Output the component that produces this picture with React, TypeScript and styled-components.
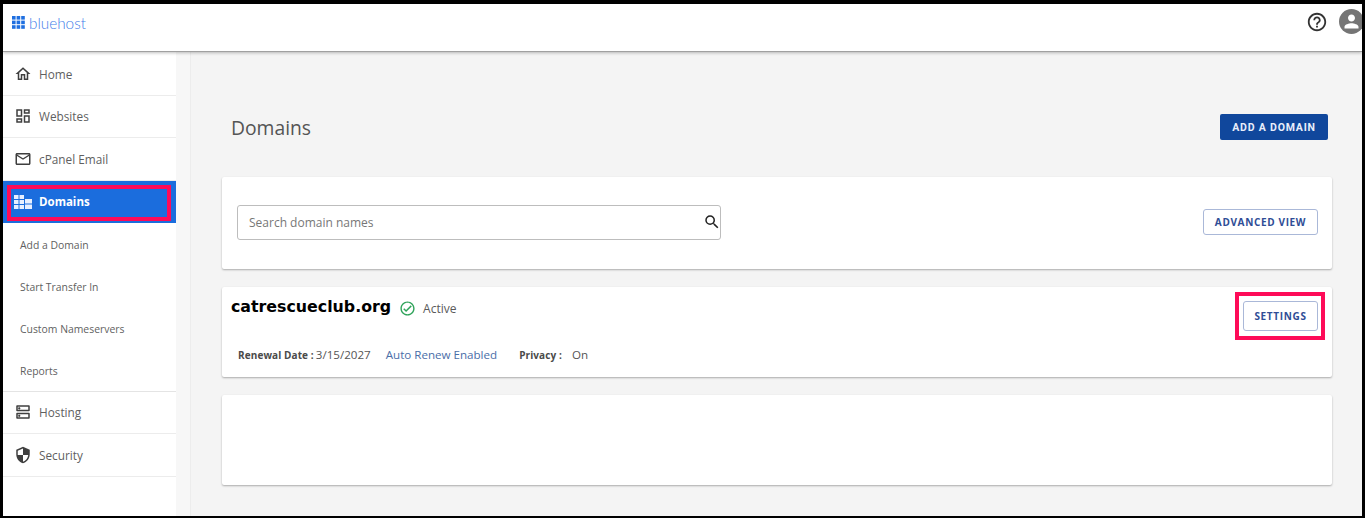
import React from "react";
import styled, { createGlobalStyle } from "styled-components";
import {
  MdOutlineHome,
  MdOutlineDashboard,
  MdOutlineEmail,
  MdOutlineDns,
  MdSecurity,
  MdHelpOutline,
  MdPerson,
  MdSearch,
  MdOutlineCheckCircle,
} from "react-icons/md";

const Global = createGlobalStyle`
  html, body { margin: 0; padding: 0; background: #000; }
  * { box-sizing: border-box; }
  body { font-family: "Open Sans", "Liberation Sans", sans-serif; }
`;

const Frame = styled.div`
  width: 1365px;
  height: 518px;
  border: solid #000;
  border-width: 4px 3px 2px 3px;
  background: #f4f4f4;
  display: flex;
  flex-direction: column;
  overflow: hidden;
`;

const Header = styled.header`
  height: 48px;
  flex: none;
  background: #fff;
  display: flex;
  align-items: center;
  justify-content: space-between;
  padding-left: 9px;
  border-bottom: 1px solid #a0a0a0;
  box-shadow: 0 1px 3px rgba(0, 0, 0, 0.25);
  position: relative;
  z-index: 2;
`;

const Logo = styled.div`
  display: flex;
  align-items: center;
  gap: 4px;
  margin-top: -10px;
  font-family: "Lato", sans-serif;
  font-size: 15.3px;
  font-weight: 300;
  color: #3f80ea;
`;

const HeaderIcons = styled.div`
  display: flex;
  align-items: center;
  gap: 11px;
  margin-top: -12px;
  margin-right: -2px;
`;

const Avatar = styled.div`
  width: 25px;
  height: 25px;
  border-radius: 50%;
  background: #757575;
  color: #fff;
  display: flex;
  align-items: center;
  justify-content: center;
`;

const Body = styled.div`
  flex: 1;
  display: flex;
  min-height: 0;
`;

const Sidebar = styled.nav`
  width: 173px;
  flex: none;
  background: #fff;
  display: flex;
  flex-direction: column;
  padding-top: 1px;
`;

const Gutter = styled.div`
  width: 15px;
  flex: none;
  background: #f7f7f7;
  border-right: 1px solid #ececec;
`;

const NavItem = styled.div<{ $active?: boolean }>`
  height: ${(p) => (p.$active ? "42px" : "42.5px")};
  flex: none;
  display: flex;
  align-items: center;
  gap: 7px;
  padding-left: 11px;
  position: relative;
  font-size: ${(p) => (p.$active ? "11.5px" : "11.8px")};
  font-weight: ${(p) => (p.$active ? 700 : 400)};
  color: ${(p) => (p.$active ? "#fff" : "#5f5f5f")};
  background: ${(p) => (p.$active ? "#1b6ddd" : "#fff")};
  border-bottom: ${(p) => (p.$active ? "none" : "1px solid #ececec")};
  svg { color: ${(p) => (p.$active ? "#e6efff" : "#3f3f3f")}; flex: none; }
`;

const SubGroup = styled.div`
  border-bottom: 1px solid #e4e4e4;
  height: 169px;
  padding-top: 1px;
  flex: none;
  display: flex;
  flex-direction: column;
`;

const SubItem = styled.div`
  height: 42px;
  flex: none;
  display: flex;
  align-items: center;
  padding-left: 17px;
  font-size: 10.4px;
  color: #5f5f5f;
`;

const ActiveMark = styled.div`
  position: absolute;
  left: 4px;
  top: 4px;
  width: 164px;
  height: 36px;
  border: 4px solid #fe0b58;
  pointer-events: none;
`;

const Main = styled.main`
  flex: 1;
  min-width: 0;
  padding: 62px 30px 0 31px;
  display: flex;
  flex-direction: column;
`;

const TitleRow = styled.div`
  display: flex;
  align-items: center;
  justify-content: space-between;
  height: 26px;
  margin-bottom: 37px;
  padding: 0 4px 0 9px;
`;

const Title = styled.h1`
  margin: 0;
  font-size: 19.3px;
  font-weight: 400;
  color: #555;
`;

const PrimaryButton = styled.button`
  width: 108px;
  height: 26px;
  padding: 0;
  border: none;
  border-radius: 2px;
  background: #10479c;
  color: #e9eefa;
  font-family: "Roboto", sans-serif;
  font-size: 10.5px;
  font-weight: 700;
  letter-spacing: 0.8px;
`;

const Card = styled.section<{ $h: number }>`
  height: ${(p) => p.$h}px;
  flex: none;
  background: #fff;
  border-radius: 2px;
  box-shadow: 0 1px 2px rgba(0, 0, 0, 0.3);
  margin-bottom: 18px;
`;

const SearchCard = styled(Card)`
  display: flex;
  align-items: center;
  justify-content: space-between;
  padding: 0 14px 2px 15px;
`;

const SearchField = styled.div`
  width: 484px;
  height: 35px;
  border: 1px solid #bdbdbd;
  border-radius: 3px;
  display: flex;
  align-items: center;
  justify-content: space-between;
  padding: 1px 0 0 11px;
  font-size: 12px;
  color: #777;
  svg { color: #222; margin-right: -1px; margin-top: -1px; }
`;

const OutlineButton = styled.button<{ $w: number; $h: number }>`
  width: ${(p) => p.$w}px;
  height: ${(p) => p.$h}px;
  padding: 0;
  background: #fff;
  border: 1px solid #aab8d8;
  border-radius: 3px;
  color: #2f4d96;
  font-family: "Open Sans", sans-serif;
  font-size: 10px;
  font-weight: 700;
  letter-spacing: 0.65px;
`;

const DomainCard = styled(Card)`
  display: flex;
  justify-content: space-between;
  padding: 5px 7px 0 9px;
`;

const DomainInfo = styled.div`
  display: flex;
  flex-direction: column;
`;

const NameRow = styled.div`
  display: flex;
  align-items: center;
  height: 30px;
`;

const DomainName = styled.span`
  font-family: "DejaVu Sans", sans-serif;
  font-size: 15.8px;
  font-weight: 700;
  color: #000;
  margin-right: 8px;
  margin-top: -2px;
`;

const Status = styled.span`
  display: flex;
  align-items: center;
  gap: 7px;
  font-size: 12px;
  color: #5a5a5a;
  margin-top: 2px;
  svg { color: #2fa35a; margin-top: 1px; }
`;

const MetaRow = styled.div`
  display: flex;
  align-items: baseline;
  margin-top: 25px;
  padding-left: 7px;
  font-size: 11.6px;
  color: #555;
`;

const MetaLabel = styled.span`
  font-size: 10px;
  font-weight: 700;
  color: #4a4a4a;
  letter-spacing: 0.1px;
  margin-right: 2px;
`;

const MetaLink = styled.span`
  color: #4a6ea8;
  margin: 0 22px 0 15px;
`;

const MetaGap = styled.span`
  margin-left: 8px;
`;

const SettingsMark = styled.div`
  width: 90px;
  height: 48px;
  border: 4px solid #fe0b58;
  display: flex;
  align-items: center;
  justify-content: flex-end;
  padding-right: 3px;
`;

const DomainsIcon = () => (
  <svg width="18" height="14" viewBox="0 0 18 14" fill="currentColor" aria-hidden="true">
    <path d="M0 0h10v14H0zM11 4h7v10h-7z" />
    <path
      d="M5 0v14M0 4.5h10M0 9.5h10M11 9h7"
      stroke="#1b6ddd"
      strokeWidth="1"
      fill="none"
    />
  </svg>
);

const LogoGrid = () => (
  <svg width="13" height="13" viewBox="0 0 13 13" fill="#1f6fe0" aria-hidden="true">
    {[0, 4.6, 9.2].flatMap((y) =>
      [0, 4.6, 9.2].map((x) => <rect key={`${x}-${y}`} x={x} y={y} width="3.6" height="3.6" />)
    )}
  </svg>
);

export default function App() {
  return (
    <Frame>
      <Global />
      <Header>
        <Logo>
          <LogoGrid />
          bluehost
        </Logo>
        <HeaderIcons>
          <MdHelpOutline size={22} color="#333" />
          <Avatar>
            <MdPerson size={21} />
          </Avatar>
        </HeaderIcons>
      </Header>
      <Body>
        <Sidebar>
          <NavItem><MdOutlineHome size={18} />Home</NavItem>
          <NavItem><MdOutlineDashboard size={18} />Websites</NavItem>
          <NavItem><MdOutlineEmail size={18} />cPanel Email</NavItem>
          <NavItem $active>
            <DomainsIcon />
            Domains
            <ActiveMark />
          </NavItem>
          <SubGroup>
            <SubItem>Add a Domain</SubItem>
            <SubItem>Start Transfer In</SubItem>
            <SubItem>Custom Nameservers</SubItem>
            <SubItem>Reports</SubItem>
          </SubGroup>
          <NavItem><MdOutlineDns size={18} />Hosting</NavItem>
          <NavItem><MdSecurity size={18} />Security</NavItem>
        </Sidebar>
        <Gutter />
        <Main>
          <TitleRow>
            <Title>Domains</Title>
            <PrimaryButton>ADD A DOMAIN</PrimaryButton>
          </TitleRow>
          <SearchCard $h={92}>
            <SearchField>
              Search domain names
              <MdSearch size={18} />
            </SearchField>
            <OutlineButton $w={115} $h={26}>ADVANCED VIEW</OutlineButton>
          </SearchCard>
          <DomainCard $h={90}>
            <DomainInfo>
              <NameRow>
                <DomainName>catrescueclub.org</DomainName>
                <Status>
                  <MdOutlineCheckCircle size={17} />
                  Active
                </Status>
              </NameRow>
              <MetaRow>
                <MetaLabel>Renewal Date :</MetaLabel>
                3/15/2027
                <MetaLink>Auto Renew Enabled</MetaLink>
                <MetaLabel>Privacy :</MetaLabel>
                <MetaGap>On</MetaGap>
              </MetaRow>
            </DomainInfo>
            <SettingsMark>
              <OutlineButton $w={75} $h={30}>SETTINGS</OutlineButton>
            </SettingsMark>
          </DomainCard>
          <Card $h={90} />
        </Main>
      </Body>
    </Frame>
  );
}
